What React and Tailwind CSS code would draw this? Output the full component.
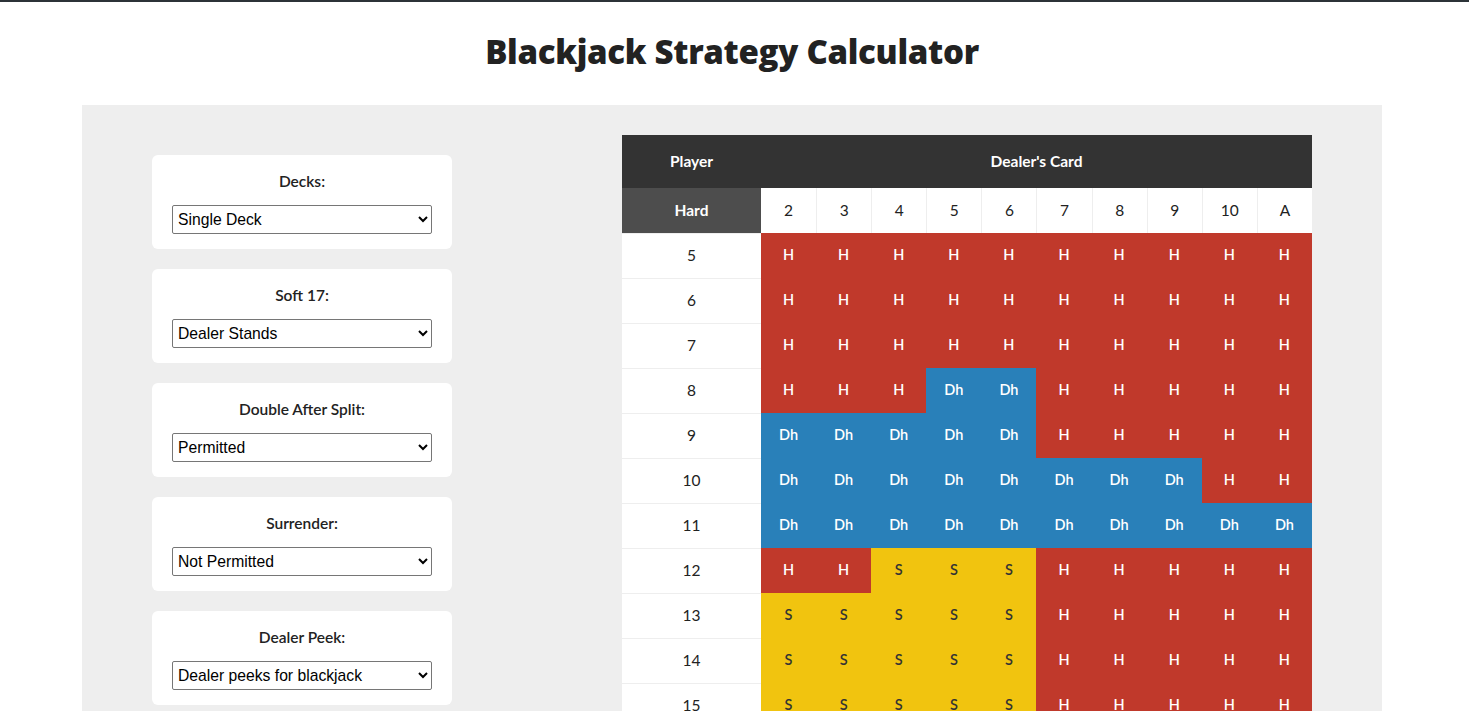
import React from "react";

const settings = [
  { label: "Decks:", value: "Single Deck", options: ["Single Deck", "Double Deck", "4 Decks", "6 Decks", "8 Decks"] },
  { label: "Soft 17:", value: "Dealer Stands", options: ["Dealer Stands", "Dealer Hits"] },
  { label: "Double After Split:", value: "Permitted", options: ["Permitted", "Not Permitted"] },
  { label: "Surrender:", value: "Not Permitted", options: ["Not Permitted", "Late Surrender"] },
  { label: "Dealer Peek:", value: "Dealer peeks for blackjack", options: ["Dealer peeks for blackjack", "No peek"] },
];

const dealer = ["2", "3", "4", "5", "6", "7", "8", "9", "10", "A"];

const row = (s) => s.split(" ");

const hard = [
  ["5", row("H H H H H H H H H H")],
  ["6", row("H H H H H H H H H H")],
  ["7", row("H H H H H H H H H H")],
  ["8", row("H H H Dh Dh H H H H H")],
  ["9", row("Dh Dh Dh Dh Dh H H H H H")],
  ["10", row("Dh Dh Dh Dh Dh Dh Dh Dh H H")],
  ["11", row("Dh Dh Dh Dh Dh Dh Dh Dh Dh Dh")],
  ["12", row("H H S S S H H H H H")],
  ["13", row("S S S S S H H H H H")],
  ["14", row("S S S S S H H H H H")],
  ["15", row("S S S S S H H H H H")],
  ["16", row("S S S S S H H H H H")],
  ["17", row("S S S S S S S S S S")],
];

const cellColor = {
  H: "bg-[#c0392b] text-white",
  Dh: "bg-[#2980b9] text-white",
  S: "bg-[#f1c40f] text-[#333]",
};

const SettingCard = ({ label, value, options }) => (
  <div className="bg-white rounded-md pt-[16px] pb-[15px] flex flex-col items-center">
    <div className="text-[15.5px] leading-[20px] font-semibold text-[#222] mb-[14px]">{label}</div>
    <select
      defaultValue={value}
      className="w-[260px] h-[29px] border border-[#767676] rounded-[2px] bg-white px-[1px] text-[15.7px] text-black font-['Liberation_Sans',Arial,sans-serif]"
    >
      {options.map((o) => (
        <option key={o}>{o}</option>
      ))}
    </select>
  </div>
);

export default function App() {
  return (
    <div className="min-h-screen bg-white font-['Lato',sans-serif] border-t-2 border-[#2c3338]">
      <div className="w-[1464px]">
        <h1 className="text-center text-[33px] font-extrabold font-['Open_Sans',sans-serif] text-[#222] pt-[29px] pb-[32px] leading-[42px] tracking-[-0.3px]">
          Blackjack Strategy Calculator
        </h1>
        <div className="mx-auto w-[1300px] bg-[#eeeeee] px-[70px] pt-[30px] pb-[40px] flex justify-between items-start">
          <div className="w-[300px] flex flex-col gap-[20px] pt-[20px]">
            {settings.map((s) => (
              <SettingCard key={s.label} {...s} />
            ))}
          </div>
          <div className="w-[690px]">
            <div className="flex h-[53px] bg-[#333333] text-white text-[15.5px] font-bold items-center">
              <div className="w-[139px] text-center">Player</div>
              <div className="flex-1 text-center">Dealer's Card</div>
            </div>
            <div className="flex h-[45px]">
              <div className="w-[139px] bg-[#4d4d4d] text-white text-[15.5px] font-bold flex items-center justify-center">
                Hard
              </div>
              <div className="flex-1 grid grid-cols-10 bg-white">
                {dealer.map((d, i) => (
                  <div
                    key={d}
                    className={`flex items-center justify-center text-[15.5px] text-[#222] border-[#eee] ${i > 0 ? "border-l" : ""}`}
                  >
                    {d}
                  </div>
                ))}
              </div>
            </div>
            {hard.map(([total, cells]) => (
              <div key={total} className="flex h-[45px]">
                <div className="w-[139px] bg-white border-t border-[#eee] flex items-center justify-center text-[15.5px] text-[#222] pb-[1px]">
                  {total}
                </div>
                <div className="flex-1 grid grid-cols-10">
                  {cells.map((c, i) => (
                    <div
                      key={i}
                      className={`flex items-center justify-center text-[14.5px] font-semibold pb-[1px] ${cellColor[c]}`}
                    >
                      {c}
                    </div>
                  ))}
                </div>
              </div>
            ))}
          </div>
        </div>
      </div>
    </div>
  );
}
